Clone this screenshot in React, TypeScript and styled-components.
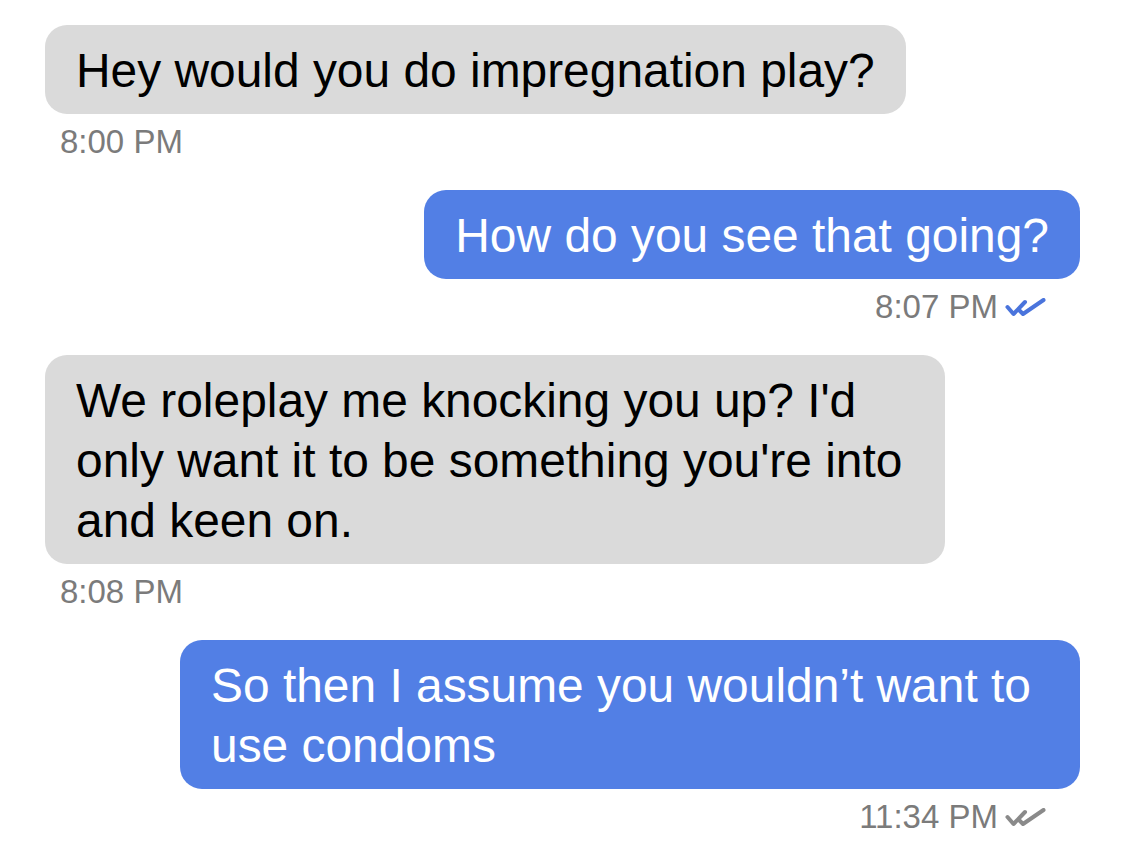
import React from 'react';
import styled, { createGlobalStyle } from 'styled-components';

const GlobalStyle = createGlobalStyle`
  html, body {
    margin: 0;
    padding: 0;
    background: #ffffff;
  }
  body {
    font-family: 'Liberation Sans', Arial, Helvetica, sans-serif;
  }
`;

const Thread = styled.div`
  width: 1125px;
  box-sizing: border-box;
  padding: 25px 45px 0 45px;
  display: flex;
  flex-direction: column;
`;

const Group = styled.div<{ $mine?: boolean }>`
  display: flex;
  flex-direction: column;
  align-items: ${({ $mine }) => ($mine ? 'flex-end' : 'flex-start')};
  margin-bottom: 28px;
`;

const Bubble = styled.div<{ $mine?: boolean }>`
  max-width: 900px;
  box-sizing: border-box;
  padding: 16px 31px 13px 31px;
  border-radius: 22px;
  background: ${({ $mine }) => ($mine ? '#527fe5' : '#dadada')};
  color: ${({ $mine }) => ($mine ? '#ffffff' : '#000000')};
  font-size: 47.9px;
  line-height: 60px;
`;

const Meta = styled.div<{ $mine?: boolean }>`
  display: flex;
  align-items: center;
  gap: 7px;
  margin-top: 8px;
  height: 40px;
  padding: ${({ $mine }) => ($mine ? '0 34px 0 0' : '0 0 0 15px')};
  font-size: 33px;
  line-height: 40px;
  color: #7b7b7b;
`;

const Ticks = ({ color }: { color: string }) => (
  <svg width="41" height="19" viewBox="0 0 41 19" fill="none">
    <path
      d="M2.5 9 L8.5 16 L20 4"
      stroke={color}
      strokeWidth="4"
      strokeLinecap="round"
      strokeLinejoin="round"
    />
    <path
      d="M14 12 L18 16 L38.5 2"
      stroke={color}
      strokeWidth="4"
      strokeLinecap="round"
      strokeLinejoin="round"
    />
  </svg>
);

type Msg = { text: string; time: string; mine?: boolean; read?: boolean };

const messages: Msg[] = [
  { text: 'Hey would you do impregnation play?', time: '8:00 PM' },
  { text: 'How do you see that going?', time: '8:07 PM', mine: true, read: true },
  {
    text: "We roleplay me knocking you up? I'd only want it to be something you're into and keen on.",
    time: '8:08 PM',
  },
  {
    text: 'So then I assume you wouldn\u2019t want to use condoms',
    time: '11:34 PM',
    mine: true,
    read: false,
  },
];

export default function App() {
  return (
    <>
      <GlobalStyle />
      <Thread>
        {messages.map((m, i) => (
          <Group key={i} $mine={m.mine}>
            <Bubble $mine={m.mine}>{m.text}</Bubble>
            <Meta $mine={m.mine}>
              {m.time}
              {m.mine && <Ticks color={m.read ? '#4a74dc' : '#8a8a8a'} />}
            </Meta>
          </Group>
        ))}
      </Thread>
    </>
  );
}
